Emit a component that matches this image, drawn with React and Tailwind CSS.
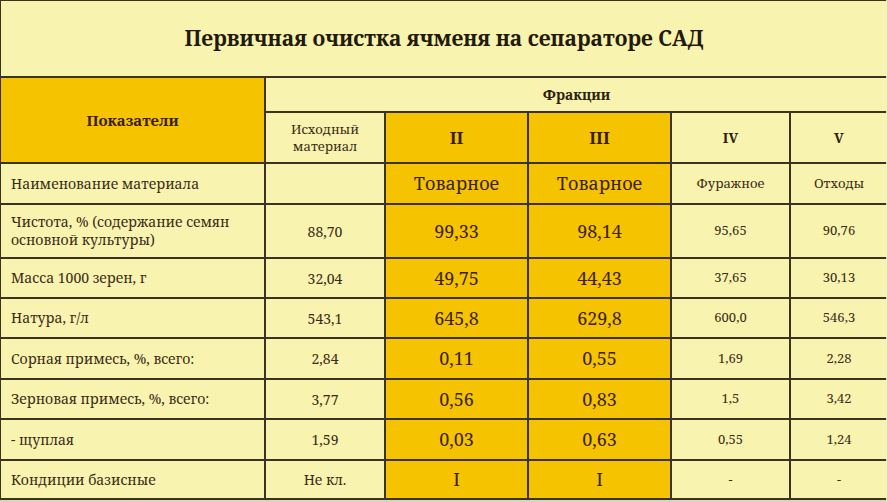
import React from "react";

const L = "bg-[#f8f3ae]";
const G = "bg-[#f6c300]";

const rows = [
  ["Наименование материала", "", "Товарное", "Товарное", "Фуражное", "Отходы"],
  ["Чистота, % (содержание семян основной культуры)", "88,70", "99,33", "98,14", "95,65", "90,76"],
  ["Масса 1000 зерен, г", "32,04", "49,75", "44,43", "37,65", "30,13"],
  ["Натура, г/л", "543,1", "645,8", "629,8", "600,0", "546,3"],
  ["Сорная примесь, %, всего:", "2,84", "0,11", "0,55", "1,69", "2,28"],
  ["Зерновая примесь, %, всего:", "3,77", "0,56", "0,83", "1,5", "3,42"],
  ["- щуплая", "1,59", "0,03", "0,63", "0,55", "1,24"],
  ["Кондиции базисные", "Не кл.", "I", "I", "-", "-"],
];

export default function App() {
  return (
    <div
      className="w-[888px] h-[502px] bg-[#d8d4c0] overflow-hidden"
      style={{ fontFamily: '"Noto Serif", "Liberation Serif", serif' }}
    >
      <div className="w-[886px] bg-[#3b3322] pt-[1px] pb-[2px] pl-[1px]">
        <div
          className="grid gap-[2px] text-[#2e1f0e]"
          style={{
            gridTemplateColumns: "263px 118px 141px 141px 117px 96px",
            gridTemplateRows: "75px 33px 49px 39px 52px 38px 38px 39px 38px 39px 37px",
          }}
        >
          <div className={`${L} col-span-6 flex items-center justify-center text-[21px] font-bold text-[#241a0c]`}>
            Первичная очистка ячменя на сепараторе САД
          </div>
          <div className={`${G} row-span-2 flex items-center justify-center text-[15px] font-bold text-[#3a1d08]`}>
            Показатели
          </div>
          <div className={`${L} col-span-5 flex items-center justify-center text-[14px] font-bold`}>
            Фракции
          </div>
          <div className={`${L} flex items-center justify-center text-center text-[13px] leading-[17px] text-[#3a2c18]`}>
            Исходный<br />материал
          </div>
          <div className={`${G} flex items-center justify-center text-[17px] font-bold text-[#3a1d08]`}>II</div>
          <div className={`${G} flex items-center justify-center text-[17px] font-bold text-[#3a1d08]`}>III</div>
          <div className={`${L} flex items-center justify-center text-[14px] font-bold`}>IV</div>
          <div className={`${L} flex items-center justify-center text-[14px] font-bold`}>V</div>
          {rows.map((r, i) => (
            <React.Fragment key={i}>
              <div className={`${L} flex items-center pl-[10px] pr-2 text-[14px] leading-[18px] text-[#3a2c18]`}>
                {r[0]}
              </div>
              <div className={`${L} flex items-center justify-center text-[14px] text-[#3a2c18]`}>{r[1]}</div>
              <div className={`${G} flex items-center justify-center text-[18px] text-[#3a2210]`}>{r[2]}</div>
              <div className={`${G} flex items-center justify-center text-[18px] text-[#3a2210]`}>{r[3]}</div>
              <div className={`${L} flex items-center justify-center text-[13px] text-[#3a2c18]`}>{r[4]}</div>
              <div className={`${L} flex items-center justify-center text-[13px] text-[#3a2c18]`}>{r[5]}</div>
            </React.Fragment>
          ))}
        </div>
      </div>
    </div>
  );
}
